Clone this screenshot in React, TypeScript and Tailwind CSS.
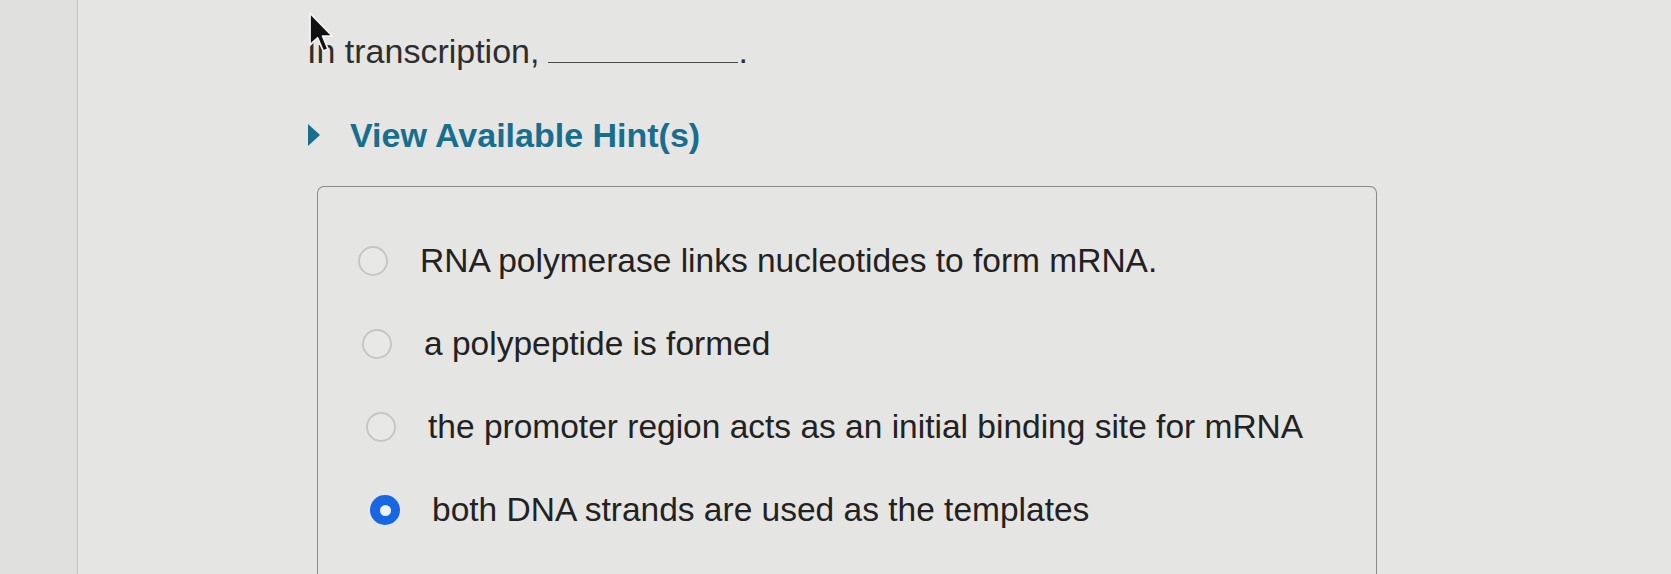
import React from 'react'

type Choice = { text: string; selected?: boolean; indent: string }

// the photo is taken at a slight angle, so each row sits a few px further right
const choices: Choice[] = [
  { text: 'RNA polymerase links nucleotides to form mRNA.', indent: 'ml-0' },
  { text: 'a polypeptide is formed', indent: 'ml-[4px]' },
  { text: 'the promoter region acts as an initial binding site for mRNA', indent: 'ml-[8px]' },
  { text: 'both DNA strands are used as the templates', selected: true, indent: 'ml-[12px]' },
]

function Radio({ selected }: { selected?: boolean }) {
  if (selected) {
    return (
      <span className="flex size-[30px] shrink-0 items-center justify-center rounded-full bg-[#1766e3]">
        <span className="size-[11px] rounded-full bg-[#eef3fb]" />
      </span>
    )
  }
  return <span className="size-[30px] shrink-0 rounded-full border-2 border-[#c6c6c4] bg-[#e8e8e6]" />
}

function Cursor() {
  return (
    <svg
      className="pointer-events-none absolute left-[308px] top-[11px]"
      width="26"
      height="44"
      viewBox="0 0 13 22"
    >
      <path
        d="M1 1 L1 17 L4.8 13.4 L7.6 20 L10 19 L7.3 12.6 L12.2 12.6 Z"
        fill="#111"
        stroke="#f2f2f2"
        strokeWidth="0.9"
        strokeLinejoin="round"
      />
    </svg>
  )
}

export default function App() {
  return (
    <div
      className="relative flex h-[574px] w-[1671px] overflow-hidden bg-[#e5e5e3] text-[#262626]"
      style={{ fontFamily: '"Liberation Sans", Arial, sans-serif' }}
    >
      <div className="w-[78px] shrink-0 border-r border-[#c3c3c1] bg-[#e0e0de]" />

      <div className="flex flex-col pl-[229px] pt-[30px]">
        <p className="h-[40px] text-[34px] leading-[40px] text-[#2e2e2e]">
          In transcription,
          <span className="ml-[9px] inline-block h-[33px] w-[190px] border-b-[1.5px] border-[#4a4a4a] align-baseline" />
          .
        </p>

        <button className="mt-[45px] flex h-[40px] items-center gap-[29px] text-left">
          <svg width="14" height="24" viewBox="0 0 14 24" className="shrink-0">
            <path d="M1 1 L13 12 L1 23 Z" fill="#176e8d" />
          </svg>
          <span className="text-[34px] font-bold leading-[40px] text-[#176e8d]">View Available Hint(s)</span>
        </button>

        <div className="mt-[31px] ml-[10px] w-[1060px] grow rounded-t-[7px] border-[1.5px] border-b-0 border-[#8a8a88] pl-[40px] pt-[52px]">
          <ul className="flex flex-col gap-[39px]">
            {choices.map((c) => (
              <li key={c.text} className={`flex h-[44px] items-center gap-[32px] ${c.indent}`}>
                <Radio selected={c.selected} />
                <span className="text-[33.5px] leading-[44px] text-[#222]">{c.text}</span>
              </li>
            ))}
          </ul>
        </div>
      </div>

      <Cursor />
    </div>
  )
}
